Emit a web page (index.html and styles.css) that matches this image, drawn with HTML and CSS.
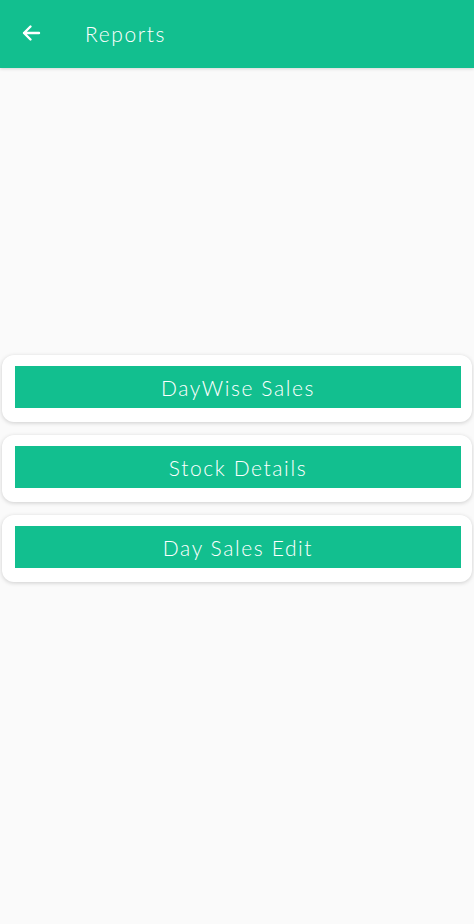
FILE: index.html
```html
<!DOCTYPE html>
<html>
<head>
<meta charset="utf-8">
<link rel="stylesheet" href="styles.css">
</head>
<body>
<header class="appbar">
  <svg class="back" width="24" height="24" viewBox="0 0 24 24"><path d="M20 12H5M11.5 5.5L5 12l6.5 6.5" fill="none" stroke="#fff" stroke-width="2.4" stroke-linecap="round" stroke-linejoin="round"/></svg>
  <span class="title">Reports</span>
</header>
<main class="content">
  <div class="card"><div class="btn">DayWise Sales</div></div>
  <div class="card"><div class="btn">Stock Details</div></div>
  <div class="card"><div class="btn">Day Sales Edit</div></div>
</main>
</body>
</html>
```
FILE: styles.css
```css
html, body { margin: 0; padding: 0; }
body {
  width: 474px;
  height: 924px;
  background: #fafafa;
  font-family: "Lato", "Noto Sans", sans-serif;
  overflow: hidden;
}
.appbar {
  height: 68px;
  background: #12bf8f;
  display: flex;
  align-items: center;
  box-shadow: 0 1px 3px rgba(0,0,0,0.15);
}
.back { margin-left: 19px; margin-top: -2px; }
.title {
  margin-left: 42px;
  color: #fff;
  font-size: 21px;
  font-weight: 300;
  letter-spacing: 1.6px;
  margin-top: -1px;
}
.content {
  padding: 287px 2px 0 2px;
  display: flex;
  flex-direction: column;
  gap: 13px;
}
.card {
  height: 67px;
  box-sizing: border-box;
  background: #fff;
  border-radius: 12px;
  box-shadow: 0 1px 4px rgba(0,0,0,0.18);
  padding: 11px 11px 14px 13px;
}
.btn {
  height: 42px;
  background: #12bf8f;
  color: #fff;
  display: flex;
  align-items: center;
  justify-content: center;
  font-size: 21px;
  font-weight: 300;
  letter-spacing: 1.6px;
}
```
